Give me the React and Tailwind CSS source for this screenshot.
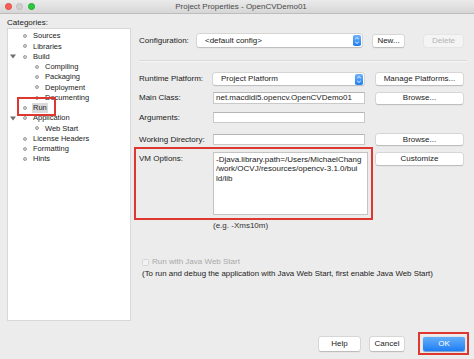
import React from "react";

const font = { fontFamily: '"Liberation Sans", Arial, sans-serif' };

function Stepper() {
  return (
    <svg width="8" height="11" viewBox="0 0 8 11" className="shrink-0">
      <defs>
        <linearGradient id="stg" x1="0" y1="0" x2="0" y2="1">
          <stop offset="0" stopColor="#6fb1fb" />
          <stop offset="1" stopColor="#1f7ff2" />
        </linearGradient>
      </defs>
      <rect x="0" y="0" width="8" height="11" rx="1.8" fill="url(#stg)" />
      <path d="M2.2 4.2 L4 2.5 L5.8 4.2" stroke="#fff" strokeWidth="0.9" fill="none" />
      <path d="M2.2 6.8 L4 8.5 L5.8 6.8" stroke="#fff" strokeWidth="0.9" fill="none" />
    </svg>
  );
}

function Combo({ w, text }) {
  return (
    <div className={`${w} h-full bg-white rounded-[2px] shadow-[0_0_0_0.5px_#c4c4c4,0_0.5px_1px_#b8b8b8] flex items-center pl-[8px] pr-[1px]`}>
      <span className="flex-1 text-[8px] text-[#222] leading-none">{text}</span>
      <Stepper />
    </div>
  );
}

function Btn({ w, children, disabled }) {
  return (
    <div
      className={`${w} h-full rounded-[2px] flex items-center justify-center text-[8px] leading-none ${
        disabled
          ? "bg-[#f4f4f4] text-[#b3b3b3] shadow-[0_0_0_0.5px_#dedede]"
          : "bg-white text-[#222] shadow-[0_0_0_0.5px_#c8c8c8,0_0.5px_1px_#b0b0b0]"
      }`}
    >
      {children}
    </div>
  );
}

function Field({ w, text }) {
  return (
    <div className={`${w} h-full bg-white border border-[#c9c9c9] border-t-[#b5b5b5] flex items-center pl-[2px]`}>
      <span className="text-[8px] text-[#222] leading-none whitespace-nowrap">{text}</span>
    </div>
  );
}

const tree = [
  { t: "Sources", l: 1 },
  { t: "Libraries", l: 1 },
  { t: "Build", l: 1, open: true },
  { t: "Compiling", l: 2 },
  { t: "Packaging", l: 2 },
  { t: "Deployment", l: 2 },
  { t: "Documenting", l: 2 },
  { t: "Run", l: 1, sel: true },
  { t: "Application", l: 1, open: true },
  { t: "Web Start", l: 2 },
  { t: "License Headers", l: 1 },
  { t: "Formatting", l: 1 },
  { t: "Hints", l: 1 },
];

function TreeRow({ item }) {
  return (
    <div className="h-[10.25px] flex items-center pl-[2px]">
      <div className="w-[6px] flex items-center justify-center">
        {item.open && (
          <svg width="6" height="5" viewBox="0 0 6 5">
            <path d="M0 0.5 L6 0.5 L3 4.5 Z" fill="#6e6e6e" />
          </svg>
        )}
      </div>
      <div className={item.l === 2 ? "w-[19px]" : "w-[7px]"} />
      <div className="w-[4px] h-[4px] rounded-full bg-[#d4d4d4] border-[0.5px] border-[#a0a0a0]" />
      {item.sel ? (
        <span className="ml-[5px] px-[1px] py-[1.5px] bg-[#dadada] text-[7.5px] leading-none text-[#222]">
          {item.t}
        </span>
      ) : (
        <span className="ml-[6px] text-[7.5px] leading-none text-[#222]">{item.t}</span>
      )}
    </div>
  );
}

export default function App() {
  return (
    <div style={font} className="w-[474px] h-[359px] bg-[#ececec] flex flex-col overflow-hidden relative">
      {/* Title bar */}
      <div className="h-[14px] shrink-0 flex items-center bg-gradient-to-b from-[#ebebeb] to-[#d6d6d6] border-b border-[#bdbdbd]">
        <div className="w-[40px] flex items-center gap-[4.5px] pl-[4.5px]">
          <div className="w-[7px] h-[7px] rounded-full bg-[#fc5f57] border-[0.5px] border-[#e0443e]" />
          <div className="w-[7px] h-[7px] rounded-full bg-[#d0d0d0] border-[0.5px] border-[#bdbdbd]" />
          <div className="w-[7px] h-[7px] rounded-full bg-[#2dc840] border-[0.5px] border-[#1aab29]" />
        </div>
        <div className="flex-1 text-center text-[8px] text-[#4a4a4a] leading-none">
          Project Properties - OpenCVDemo01
        </div>
        <div className="w-[32px]" />
      </div>

      <div className="flex flex-1 min-h-0">
        {/* Left */}
        <div className="w-[136px] shrink-0 pl-[7px] flex flex-col">
          <div className="h-[14px] flex items-end pb-[1px] text-[8px] text-[#222] leading-none">Categories:</div>
          <div className="w-[124px] h-[293px] bg-white border-[0.5px] border-[#d8d8d8] pt-[2px]">
            {tree.map((it) => (
              <TreeRow key={it.t} item={it} />
            ))}
          </div>
        </div>

        {/* Right */}
        <div className="flex-1 pl-[3px] flex flex-col">
          <div className="mt-[20px] h-[13px] flex items-center">
            <div className="w-[58px] text-[8px] text-[#222] leading-none">Configuration:</div>
            <Combo w="w-[165px]" text="<default config>" />
            <div className="ml-[11px] h-[12px]">
              <Btn w="w-[31px]">New...</Btn>
            </div>
            <div className="ml-[20px] h-[12px]">
              <Btn w="w-[39px]" disabled>
                Delete
              </Btn>
            </div>
          </div>

          <div className="mt-[13px] w-[328px] h-px bg-[#d9d9d9] border-b border-[#f6f6f6] box-content" />

          <div className="mt-[11px] h-[12px] flex items-center">
            <div className="w-[74px] text-[8px] text-[#222] leading-none">Runtime Platform:</div>
            <Combo w="w-[151px]" text="Project Platform" />
            <div className="ml-[12px] h-full">
              <Btn w="w-[87px]">Manage Platforms...</Btn>
            </div>
          </div>

          <div className="mt-[7px] h-[12px] flex items-center">
            <div className="w-[74px] text-[8px] text-[#222] leading-none">Main Class:</div>
            <Field w="w-[152px]" text="net.macdidi5.opencv.OpenCVDemo01" />
            <div className="ml-[11px] h-[11px]">
              <Btn w="w-[87px]">Browse...</Btn>
            </div>
          </div>

          <div className="mt-[8px] h-[11px] flex items-center">
            <div className="w-[74px] text-[8px] text-[#222] leading-none">Arguments:</div>
            <Field w="w-[152px]" text="" />
          </div>

          <div className="mt-[11px] h-[11px] flex items-center">
            <div className="w-[74px] text-[8px] text-[#222] leading-none">Working Directory:</div>
            <Field w="w-[152px]" text="" />
            <div className="ml-[11px] h-full">
              <Btn w="w-[87px]">Browse...</Btn>
            </div>
          </div>

          <div className="mt-[7px] flex items-start">
            <div className="w-[74px] pt-[3px] text-[8px] text-[#222] leading-none">VM Options:</div>
            <div className="w-[155px] h-[63px] bg-white border border-[#c4c4c4] px-[2px] pt-[2px] text-[8px] leading-[9.3px] text-[#222]">
              <div className="whitespace-nowrap">-Djava.library.path=/Users/MichaelChang</div>
              <div className="whitespace-nowrap">/work/OCVJ/resources/opencv-3.1.0/bui</div>
              <div className="whitespace-nowrap">ld/lib</div>
            </div>
            <div className="ml-[8px] mt-[1px] h-[12px]">
              <Btn w="w-[87px]">Customize</Btn>
            </div>
          </div>

          <div className="mt-[6px] ml-[74px] h-[10px] flex items-center text-[8px] text-[#333] leading-none">
            (e.g. -Xms10m)
          </div>

          <div className="mt-[26px] h-[10px] flex items-center pl-[3px]">
            <div className="w-[7px] h-[7px] rounded-[1.5px] bg-[#f2f2f2] border-[0.5px] border-[#d6d6d6]" />
            <span className="ml-[3px] text-[8px] text-[#a9a9a9] leading-none">Run with Java Web Start</span>
          </div>
          <div className="mt-[2px] h-[10px] flex items-center pl-[3px] text-[7.9px] text-[#222] leading-none whitespace-nowrap">
            (To run and debug the application with Java Web Start, first enable Java Web Start)
          </div>

          <div className="mt-auto mb-[8px] h-[14px] flex justify-end pr-[9px]">
            <Btn w="w-[41px]">Help</Btn>
            <div className="ml-[10px] h-full">
              <Btn w="w-[34px]">Cancel</Btn>
            </div>
            <div className="ml-[19px] w-[42px] h-full rounded-[2px] bg-gradient-to-b from-[#63aef8] to-[#1b7df4] shadow-[0_0.5px_1px_#7a9ccc] flex items-center justify-center text-[8px] text-white leading-none">
              OK
            </div>
          </div>
        </div>
      </div>

      {/* Red annotation rectangles */}
      <div className="absolute left-[17px] top-[97px] w-[39px] h-[19px] border-2 border-[#dd3730]" />
      <div className="absolute left-[134px] top-[147px] w-[239px] h-[73px] border-2 border-[#dd3730]" />
      <div className="absolute left-[418px] top-[332px] w-[51px] h-[23px] border-2 border-[#dd3730]" />
    </div>
  );
}
